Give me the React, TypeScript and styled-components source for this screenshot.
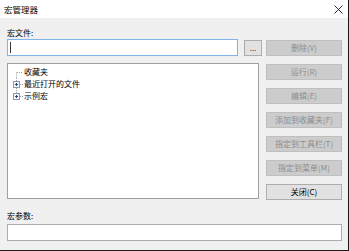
import React from "react";
import styled, { createGlobalStyle } from "styled-components";

const Global = createGlobalStyle`
  html, body { margin: 0; padding: 0; background: #f0f0f0; }
  * { box-sizing: border-box; }
`;

const FONT = `"Noto Sans CJK SC", "Noto Sans", "Liberation Sans", sans-serif`;

const Window = styled.div`
  width: 349px;
  height: 251px;
  background: #f0f0f0;
  border-right: 1px solid #1b1b1b;
  border-bottom: 1px solid #1b1b1b;
  display: flex;
  flex-direction: column;
  font-family: ${FONT};
  font-size: 8px;
  color: #000;
`;

const TitleBar = styled.div`
  height: 18px;
  background: #fff;
  display: flex;
  align-items: center;
  justify-content: space-between;
  padding: 0 5px 0 4px;
`;

const Title = styled.span`
  font-size: 8.5px;
  line-height: 12px;
`;

const Body = styled.div`
  display: flex;
  flex-direction: column;
  padding: 0 6px 0 7px;
`;

const Label = styled.div<{ $top: number }>`
  margin-top: ${(p) => p.$top}px;
  height: 12px;
  line-height: 12px;
  font-size: 8px;
`;

const TopRow = styled.div`
  display: flex;
  align-items: flex-end;
  height: 17px;
`;

const TextBox = styled.div<{ $width: number; $focused?: boolean; $top?: number }>`
  width: ${(p) => p.$width}px;
  height: 17px;
  margin-top: ${(p) => p.$top ?? 0}px;
  background: #fff;
  border: 1px solid ${(p) => (p.$focused ? "#7eb4ea" : "#adadad")};
  display: flex;
  align-items: center;
  padding-left: 2px;
`;

const Caret = styled.span`
  width: 1px;
  height: 11px;
  background: #3a3a3a;
`;

const Button = styled.button<{ $disabled?: boolean; $width?: number }>`
  width: ${(p) => p.$width ?? 76}px;
  height: 16px;
  margin: 0;
  padding: 0;
  font-family: ${FONT};
  font-size: 8px;
  line-height: 14px;
  background: ${(p) => (p.$disabled ? "#cccccc" : "#e1e1e1")};
  border: 1px solid ${(p) => (p.$disabled ? "#bfbfbf" : "#adadad")};
  color: ${(p) => (p.$disabled ? "#8d8d8d" : "#000")};
  display: flex;
  align-items: center;
  justify-content: center;
  white-space: nowrap;
  flex-shrink: 0;
`;

const BrowseButton = styled(Button)`
  margin-left: 6px;
  color: #333;
`;

const DeleteButton = styled(Button)`
  margin-left: 4px;
`;

const MainRow = styled.div`
  display: flex;
  gap: 7px;
  margin-top: 7px;
  align-items: flex-start;
`;

const TreeBox = styled.div`
  width: 252px;
  height: 136px;
  background: #fff;
  border: 1px solid #a0a0a0;
  padding-top: 2px;
`;

const TreeRow = styled.div`
  height: 12px;
  display: flex;
  align-items: center;
`;

const TreeText = styled.span`
  font-size: 8px;
  line-height: 12px;
`;

const ButtonColumn = styled.div`
  display: flex;
  flex-direction: column;
  gap: 8px;
  padding-top: 1px;
`;

type Kind = "first" | "middle" | "last";

const Connector: React.FC<{ kind: Kind; expandable: boolean }> = ({ kind, expandable }) => {
  const line = "#a0a0a0";
  return (
    <svg width="16" height="12" viewBox="0 0 16 12" style={{ display: "block", flexShrink: 0 }}>
      {kind === "first" && (
        <line x1="8.5" y1="6.5" x2="8.5" y2="12" stroke={line} strokeDasharray="1 1" />
      )}
      {kind === "middle" && (
        <line x1="8.5" y1="0" x2="8.5" y2="12" stroke={line} strokeDasharray="1 1" />
      )}
      {kind === "last" && (
        <line x1="8.5" y1="0" x2="8.5" y2="6" stroke={line} strokeDasharray="1 1" />
      )}
      <line x1={expandable ? 12 : 9} y1="6.5" x2="15" y2="6.5" stroke={line} strokeDasharray="1 1" />
      {expandable && (
        <g>
          <rect x="5.5" y="3.5" width="6" height="6" fill="#f4f6fa" stroke="#8a9ab0" />
          <line x1="7" y1="6.5" x2="10" y2="6.5" stroke="#2a4a80" />
          <line x1="8.5" y1="5" x2="8.5" y2="8" stroke="#2a4a80" />
        </g>
      )}
    </svg>
  );
};

const CloseIcon = () => (
  <svg width="9" height="9" viewBox="0 0 9 9" style={{ display: "block" }}>
    <line x1="0.5" y1="0.5" x2="8.5" y2="8.5" stroke="#111" strokeWidth="0.9" />
    <line x1="8.5" y1="0.5" x2="0.5" y2="8.5" stroke="#111" strokeWidth="0.9" />
  </svg>
);

const treeItems: { text: string; kind: Kind; expandable: boolean }[] = [
  { text: "收藏夹", kind: "first", expandable: false },
  { text: "最近打开的文件", kind: "middle", expandable: true },
  { text: "示例宏", kind: "last", expandable: true },
];

const sideButtons: { text: string; disabled: boolean }[] = [
  { text: "运行(R)", disabled: true },
  { text: "编辑(E)", disabled: true },
  { text: "添加到收藏夹(F)", disabled: true },
  { text: "指定到工具栏(T)", disabled: true },
  { text: "指定到菜单(M)", disabled: true },
  { text: "关闭(C)", disabled: false },
];

export default function App() {
  return (
    <>
      <Global />
      <Window>
        <TitleBar>
          <Title>宏管理器</Title>
          <CloseIcon />
        </TitleBar>
        <Body>
          <Label $top={9}>宏文件:</Label>
          <TopRow>
            <TextBox $width={231} $focused>
              <Caret />
            </TextBox>
            <BrowseButton $width={18}>...</BrowseButton>
            <DeleteButton $disabled>删除(V)</DeleteButton>
          </TopRow>
          <MainRow>
            <TreeBox>
              {treeItems.map((item) => (
                <TreeRow key={item.text}>
                  <Connector kind={item.kind} expandable={item.expandable} />
                  <TreeText>{item.text}</TreeText>
                </TreeRow>
              ))}
            </TreeBox>
            <ButtonColumn>
              {sideButtons.map((b) => (
                <Button key={b.text} $disabled={b.disabled}>
                  {b.text}
                </Button>
              ))}
            </ButtonColumn>
          </MainRow>
          <Label $top={10}>宏参数:</Label>
          <TextBox $width={335} $top={2} />
        </Body>
      </Window>
    </>
  );
}
